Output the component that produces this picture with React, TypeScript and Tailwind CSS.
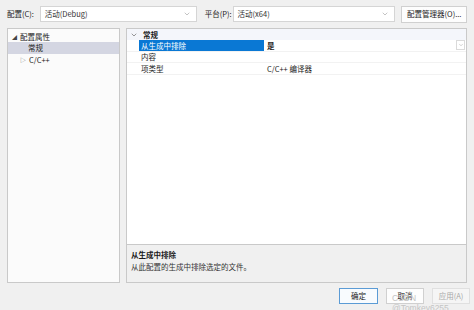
import { ChevronDown } from 'lucide-react'

const font = { fontFamily: '"Noto Sans CJK SC", "Noto Sans", sans-serif' }

function Select({ value, className }: { value: string; className: string }) {
  return (
    <div className={`h-[16px] bg-white border border-[#d5d5d5] flex items-center justify-between pl-[4px] pr-[5px] ${className}`}>
      <span className="text-[#333]">{value}</span>
      <ChevronDown size={8} strokeWidth={1.5} className="text-[#888]" />
    </div>
  )
}

const rows = [
  { name: '从生成中排除', value: '是', selected: true },
  { name: '内容', value: '' },
  { name: '项类型', value: 'C/C++ 编译器' },
]

export default function App() {
  return (
    <div className="relative w-[474px] h-[310px] bg-[#f0f0f0] overflow-hidden text-[7.5px] leading-none text-[#1a1a1a]" style={font}>
      {/* top bar */}
      <div className="flex items-center h-[16px] mt-[6px] px-[7px]">
        <span className="w-[33px]">配置(C):</span>
        <Select value="活动(Debug)" className="w-[158px]" />
        <span className="ml-[8px] w-[28px]">平台(P):</span>
        <Select value="活动(x64)" className="w-[164px]" />
        <button className="ml-[6px] w-[66px] h-[17px] bg-[#fdfdfd] border border-[#d0d0d0] text-[#1a1a1a]">配置管理器(O)...</button>
      </div>

      {/* main panels */}
      <div className="flex gap-[6px] px-[7px] mt-[6px] h-[255px]">
        <div className="w-[113px] bg-[#fbfbfb] border border-[#c9c9c9] pt-[2px]">
          <div className="flex items-center h-[11px] pl-[4px]">
            <span className="text-[5px] text-[#444] w-[8px]">◢</span>
            <span>配置属性</span>
          </div>
          <div className="flex items-center h-[12px] pl-[20px] bg-[#d4d6e2]">常规</div>
          <div className="flex items-center h-[11px] pl-[12px]">
            <span className="text-[6px] text-[#666] w-[9px]">▷</span>
            <span>C/C++</span>
          </div>
        </div>

        <div className="flex-1 flex flex-col border border-[#c9c9c9]">
          <div className="flex-1 bg-white">
            <div className="flex items-center h-[11px] bg-[#f4f6fb] pl-[3px] font-bold">
              <ChevronDown size={8} strokeWidth={1.8} className="text-[#555] mr-[5px]" />
              <span>常规</span>
            </div>
            {rows.map(r => (
              <div key={r.name} className="flex h-[11.5px] border-b border-[#f2f2f2]">
                <div className={`w-[125px] ml-[12px] flex items-center pl-[2px] ${r.selected ? 'bg-[#0a78d4] text-white' : ''}`}>{r.name}</div>
                <div className="flex-1 flex items-center justify-between pl-[3px]">
                  <span className={r.selected ? 'font-bold' : ''}>{r.value}</span>
                  {r.selected && (
                    <div className="w-[9px] h-[10px] border border-[#dadada] flex items-center justify-center mr-[1px]">
                      <ChevronDown size={6} strokeWidth={1.5} className="text-[#888]" />
                    </div>
                  )}
                </div>
              </div>
            ))}
          </div>
          <div className="h-[38px] border-t border-[#c9c9c9] bg-[#f0f0f0] px-[4px] pt-[6px] flex flex-col gap-[4px]">
            <span className="font-bold">从生成中排除</span>
            <span className="text-[#333]">从此配置的生成中排除选定的文件。</span>
          </div>
        </div>
      </div>

      {/* buttons */}
      <div className="flex justify-end gap-[8px] px-[4px] mt-[5px]">
        <button className="w-[39px] h-[16px] bg-[#f8fbfe] border border-[#5b9bd5]">确定</button>
        <button className="w-[38px] h-[16px] bg-[#fdfdfd] border border-[#d0d0d0]">取消</button>
        <button className="w-[38px] h-[16px] bg-[#f5f5f5] border border-[#e0e0e0] text-[#a8a8a8]">应用(A)</button>
      </div>

      {/* watermark */}
      <span className="absolute left-[392px] top-[293px] text-[8.5px] leading-[10px] text-[#c4c4c4]" style={{ fontFamily: '"Liberation Sans", sans-serif' }}>CSDN @Tomkey6255</span>
    </div>
  )
}
